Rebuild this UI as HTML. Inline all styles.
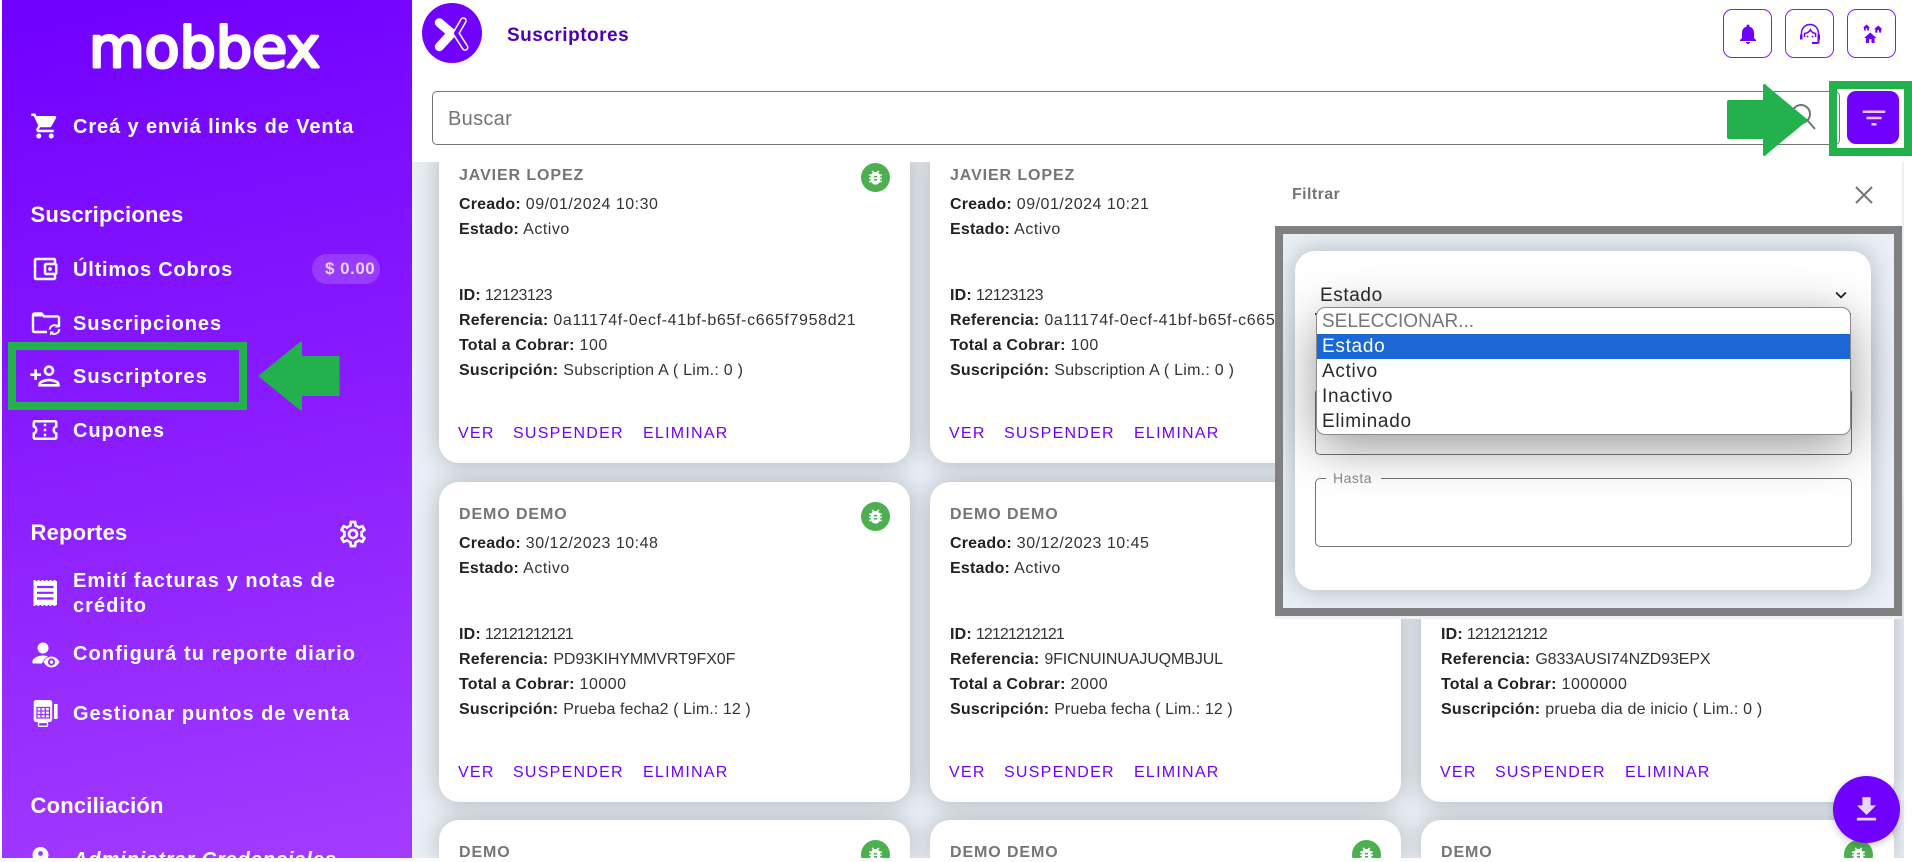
<!DOCTYPE html>
<html lang="es"><head><meta charset="utf-8"><title>Suscriptores</title>
<style>
html,body{margin:0;padding:0;background:#fff;width:1912px;height:862px;overflow:hidden}
body{position:relative;font-family:"Liberation Sans",Arial,sans-serif;color:#292929}
.a{position:absolute;white-space:nowrap}
#side{position:absolute;left:2px;top:0;width:410px;height:858px;overflow:hidden;background:linear-gradient(168deg,#7000ff 0%,#8a1cff 50%,#a43cff 100%);color:#fff}
#side .i{position:absolute;left:71px;font-size:20px;line-height:24px;font-weight:700;letter-spacing:.9px;white-space:nowrap}
#side .h{position:absolute;left:28.5px;font-size:22px;line-height:28px;font-weight:700;letter-spacing:.2px;white-space:nowrap}
#side svg{position:absolute;overflow:visible}
#main{position:absolute;left:412px;top:162px;width:1492px;height:696px;overflow:hidden;background:#e9eff5}
.card{position:absolute;width:471px;height:320px;background:#fff;border-radius:20px;box-shadow:0 0 24px rgba(45,52,58,.3)}
.card.c3{width:473px}
.card.low{height:38px;border-radius:20px 20px 0 0;overflow:hidden}
.card div,.card b,.card span{white-space:nowrap}
.card .l{position:absolute;left:20px;font-size:16px;line-height:20px;letter-spacing:.5px;color:#333}
.card .l b{color:#222;letter-spacing:.2px}
.card .t{position:absolute;left:20px;top:23px;font-size:16px;line-height:20px;font-weight:700;letter-spacing:.9px;color:#757575}
.card .act{position:absolute;top:281px;font-size:16px;line-height:20px;letter-spacing:1.25px;color:#7000ff}
.card svg{position:absolute;left:422px;top:20px;width:29px;height:29px}
.r1{top:52px}.r2{top:77px}.r3{top:143px}.r4{top:168px}.r5{top:193px}.r6{top:218px}
.hex{letter-spacing:.65px}.cod{letter-spacing:-.1px}.sub{letter-spacing:.1px}.id1{letter-spacing:-.5px;margin-left:-1px}.id2{letter-spacing:-.9px;margin-left:-1px}
.hb{position:absolute;top:9px;width:47px;height:47px;border:1.5px solid #7f1cff;border-radius:9px;background:#fff}
#drawer{position:absolute;left:1275px;top:162px;width:627px;height:457px;background:#fff}
.opt{position:absolute;left:0;width:100%;height:25px;line-height:25px;font-size:19px;letter-spacing:.7px;text-indent:5px;color:#2a2a2a;white-space:nowrap}
</style></head>
<body>
<svg width="0" height="0" style="position:absolute"><defs>
<symbol id="bug" viewBox="0 0 29 29"><circle cx="14.5" cy="14.5" r="14.5" fill="#4caf50"/><path transform="translate(5 5) scale(.79)" fill="#fff" d="M20 8h-2.81c-.45-.78-1.07-1.45-1.82-1.96L17 4.41 15.59 3l-2.17 2.17C12.96 5.06 12.49 5 12 5c-.49 0-.96.06-1.41.17L8.41 3 7 4.41l1.62 1.63C7.88 6.55 7.26 7.22 6.81 8H4v2h2.09c-.05.33-.09.66-.09 1v1H4v2h2v1c0 .34.04.67.09 1H4v2h2.81c1.04 1.79 2.97 3 5.19 3s4.15-1.21 5.19-3H20v-2h-2.09c.05-.33.09-.66.09-1v-1h2v-2h-2v-1c0-.34-.04-.67-.09-1H20V8zm-6 8h-4v-2h4v2zm0-4h-4v-2h4v2z"/></symbol>
</defs></svg>

<div id="side">
<svg style="left:88px;top:16px" width="235" height="56"><text x="-1" y="51" font-family="DejaVu Sans" font-size="56" fill="#fff" stroke="#fff" stroke-width="3" stroke-linejoin="round" textLength="231" lengthAdjust="spacingAndGlyphs">mobbex</text></svg>

<svg style="left:28px;top:111px" width="30" height="30" viewBox="0 0 24 24" fill="#fff"><path d="M7 18c-1.1 0-1.99.9-1.99 2S5.9 22 7 22s2-.9 2-2-.9-2-2-2zM1 2v2h2l3.6 7.59-1.35 2.45c-.16.28-.25.61-.25.96 0 1.1.9 2 2 2h12v-2H7.42c-.14 0-.25-.11-.25-.25l.03-.12.9-1.63h7.45c.75 0 1.41-.41 1.75-1.03l3.58-6.49c.08-.14.12-.31.12-.48 0-.55-.45-1-1-1H5.21l-.94-2H1zm16 16c-1.1 0-1.99.9-1.99 2s.89 2 1.99 2 2-.9 2-2-.9-2-2-2z"/></svg>
<div class="i" style="top:115px">Creá y enviá links de Venta</div>

<div class="h" style="top:201px">Suscripciones</div>
<svg style="left:28px;top:254px" width="30" height="30" viewBox="0 0 24 24" fill="#fff"><path d="M21 7.28V5c0-1.1-.9-2-2-2H5c-1.11 0-2 .9-2 2v14c0 1.1.89 2 2 2h14c1.1 0 2-.9 2-2v-2.28c.59-.35 1-.98 1-1.72V9c0-.74-.41-1.38-1-1.72zM20 9v6h-7V9h7zM5 19V5h14v2h-6c-1.1 0-2 .9-2 2v6c0 1.1.9 2 2 2h6v2H5z"/><circle cx="16" cy="12" r="1.5"/></svg>
<div class="i" style="top:258px;letter-spacing:.8px">Últimos Cobros</div>
<div class="a" style="left:310px;top:254px;width:68px;height:30px;border-radius:15px;background:rgba(255,255,255,.17);font-size:17px;line-height:30px;font-weight:700;letter-spacing:.5px;text-indent:13px;color:rgba(255,255,255,.78)">$ 0.00</div>

<svg style="left:28px;top:309px" width="32" height="30" viewBox="0 0 32 30" fill="none" stroke="#fff" stroke-width="2.4"><path d="M29 18V9c0-1-.7-1.6-1.6-1.6H14L11.5 4.500H4.600C3.400 4.500 3 5.300 3 6v15.500c0 1 .6 1.500 1.500 1.500H17"/><path d="M3 5h9l2 2.500H3z" fill="#fff" stroke="none"/><path d="M19.700 20.500a5 5 0 0 1 8.400-3M29.300 20a5 5 0 0 1-8.500 3.500" stroke-width="2"/><path d="M28.800 14.500v4h-4zM20 26.500v-4h4z" fill="#fff" stroke="none"/></svg>
<div class="i" style="top:312px;letter-spacing:.95px">Suscripciones</div>

<svg style="left:27px;top:360px" width="32" height="32" viewBox="0 0 24 24" fill="#fff"><path d="M15 12c2.21 0 4-1.79 4-4s-1.790-4-4-4-4 1.790-4 4 1.790 4 4 4zm0-6c1.100 0 2 .9 2 2s-.9 2-2 2-2-.9-2-2 .9-2 2-2zm0 8c-2.670 0-8 1.340-8 4v2h16v-2c0-2.660-5.330-4-8-4zm-6 4c.22-.72 3.310-2 6-2 2.700 0 5.800 1.290 6 2H9zm-3-3v-3h3v-2H6V7H4v3H1v2h3v3h2z"/></svg>
<div class="i" style="top:364.5px;letter-spacing:1.05px">Suscriptores</div>

<svg style="left:28px;top:415px" width="30" height="30" viewBox="0 0 24 24" fill="#fff"><path d="M22 10V6c0-1.110-.9-2-2-2H4c-1.100 0-1.990.89-1.990 2v4c1.100 0 1.990.9 1.990 2s-.89 2-2 2v4c0 1.100.9 2 2 2h16c1.100 0 2-.9 2-2v-4c-1.100 0-2-.9-2-2s.9-2 2-2zm-2-1.460c-1.190.69-2 1.990-2 3.460s.81 2.770 2 3.460V18H4v-2.540c1.190-.69 2-1.990 2-3.460 0-1.480-.8-2.770-1.990-3.460L4 6h16v2.540zM11 15h2v2h-2zm0-4h2v2h-2zm0-4h2v2h-2z"/></svg>
<div class="i" style="top:419px">Cupones</div>

<div class="h" style="top:519px">Reportes</div>
<svg style="left:335px;top:518px" width="32" height="32" viewBox="0 0 24 24" fill="#fff"><path d="M19.430 12.980c.04-.32.07-.64.07-.98 0-.34-.03-.66-.07-.98l2.110-1.650c.19-.15.24-.42.12-.64l-2-3.460c-.09-.16-.26-.25-.44-.25-.06 0-.12.01-.17.03l-2.490 1c-.52-.4-1.080-.73-1.690-.98l-.38-2.650C14.460 2.180 14.250 2 14 2h-4c-.25 0-.46.18-.49.42l-.38 2.650c-.61.25-1.170.59-1.690.98l-2.490-1c-.06-.02-.12-.03-.18-.03-.17 0-.34.09-.43.25l-2 3.460c-.13.22-.07.49.12.64l2.110 1.650c-.04.32-.07.65-.07.98 0 .33.03.66.07.98l-2.110 1.650c-.19.15-.24.42-.12.64l2 3.460c.09.16.26.25.44.25.06 0 .12-.01.17-.03l2.490-1c.52.4 1.080.73 1.690.98l.38 2.650c.03.24.24.42.49.42h4c.25 0 .46-.18.49-.42l.38-2.650c.61-.25 1.170-.59 1.690-.98l2.490 1c.06.02.12.03.18.03.17 0 .34-.09.43-.25l2-3.460c.12-.22.07-.49-.12-.64l-2.110-1.650zm-1.980-1.710c.04.31.05.52.05.73 0 .21-.02.43-.05.73l-.14 1.130.89.7 1.080.84-.7 1.210-1.270-.51-1.040-.42-.9.68c-.43.32-.84.56-1.250.73l-1.060.43-.16 1.130-.2 1.350h-1.400l-.19-1.350-.16-1.130-1.060-.43c-.43-.18-.83-.41-1.230-.71l-.91-.7-1.060.43-1.270.51-.7-1.210 1.080-.84.89-.7-.14-1.130c-.03-.31-.05-.54-.05-.74s.02-.43.05-.73l.14-1.130-.89-.7-1.080-.84.7-1.210 1.270.51 1.040.42.9-.68c.43-.32.84-.56 1.250-.73l1.060-.43.16-1.130.2-1.350h1.390l.19 1.350.16 1.130 1.060.43c.43.18.83.41 1.230.71l.91.7 1.060-.43 1.270-.51.7 1.210-1.070.85-.89.7.14 1.130zM12 8c-2.210 0-4 1.790-4 4s1.790 4 4 4 4-1.790 4-4-1.790-4-4-4zm0 6c-1.100 0-2-.9-2-2s.9-2 2-2 2 .9 2 2-.9 2-2 2z"/></svg>

<svg style="left:31px;top:580px" width="25" height="26" viewBox="0 0 25 26"><rect x=".5" y="1" width="23.500" height="24" fill="#fff"/><path d="M.5 .8h23.500M.5 25.200h23.500" stroke="#fff" stroke-width="1.600" stroke-dasharray="2 2"/><path d="M4 7h16.500M4 12.800h16.500M4 18.500h16.500" stroke="#8f25ff" stroke-width="2.200"/></svg>
<div class="i" style="top:568.5px;letter-spacing:1.05px">Emití facturas y notas de</div>
<div class="i" style="top:593.5px;letter-spacing:1.05px">crédito</div>

<svg style="left:30px;top:641px" width="30" height="28" viewBox="0 0 30 28"><circle cx="11" cy="7" r="5.500" fill="#fff"/><path d="M.5 22.500v-2c0-3.500 6-6 10.500-6 1.700 0 3.500.4 5 1-2.500 1.500-4.500 3.300-6 7z" fill="#fff"/><path d="M11.500 21c2-3.600 5-5.500 8-5.500s6 1.900 8 5.500c-2 3.600-5 5.500-8 5.500s-6-1.900-8-5.500z" fill="#fff"/><circle cx="19.500" cy="21" r="3.600" fill="#9529ff"/><circle cx="19.500" cy="21" r="1.700" fill="#fff"/></svg>
<div class="i" style="top:641.5px;letter-spacing:1.1px">Configurá tu reporte diario</div>

<svg style="left:31px;top:699px" width="26" height="28" viewBox="0 0 26 28"><rect x=".7" y="1" width="18.500" height="22" rx="2.500" fill="#fff"/><rect x="4" y="4" width="12" height="15" fill="#fff"/><path d="M4 8.500h12.500v10.500H4zM8 8.500v10.500M12.300 8.500v10.500M4 12h12.500M4 15.500h12.500" fill="none" stroke="#9a30ff" stroke-width="1.300"/><rect x="21" y="5" width="3.600" height="15" rx=".6" fill="#fff"/><path d="M5.500 23.500h9v3c0 .5-.4.8-.8.8H6.300c-.4 0-.8-.3-.8-.8z" fill="none" stroke="#fff" stroke-width="1.300"/></svg>
<div class="i" style="top:701.5px;letter-spacing:1px">Gestionar puntos de venta</div>

<div class="h" style="top:792px">Conciliación</div>
<svg style="left:30px;top:847px;overflow:hidden" width="18" height="11" viewBox="0 0 18 11"><circle cx="8.500" cy="8" r="8" fill="#fff"/><circle cx="8.500" cy="6.500" r="2.400" fill="#a03aff"/></svg>
<div class="i" style="top:848px;height:10px;overflow:hidden;font-style:italic">Administrar Credenciales</div>
</div>

<!-- header -->
<svg class="a" style="left:420px;top:0" width="70" height="70" viewBox="0 0 70 70"><circle cx="32" cy="33" r="30" fill="#7000ff"/><path d="M19.300 22.700 31.700 33.300 19.300 46.700" fill="none" stroke="#fff" stroke-width="9" stroke-linecap="round" stroke-linejoin="round"/><path d="M43.300 20.700 36 33.300 45 47.300" fill="none" stroke="#fff" stroke-width="7" stroke-linecap="round" stroke-linejoin="round"/><path d="M43.300 20.700 36 33.300 45 47.300" fill="none" stroke="#7000ff" stroke-width="4" stroke-linecap="round" stroke-linejoin="round"/></svg>
<div class="a" style="left:507px;top:24px;font-size:19px;line-height:24px;font-weight:700;letter-spacing:.5px;color:#4b00b5">Suscriptores</div>

<div class="hb" style="left:1723px"><svg style="position:absolute;left:11.500px;top:11.500px" width="24" height="24" viewBox="0 0 24 24" fill="#7000ff"><path d="M12 22c1.100 0 2-.9 2-2h-4c0 1.100.89 2 2 2zm6-6v-5c0-3.070-1.640-5.640-4.500-6.320V4c0-.83-.67-1.500-1.500-1.500s-1.500.67-1.500 1.500v.68C7.630 5.360 6 7.920 6 11v5l-2 2v1h16v-1l-2-2z"/></svg></div>
<div class="hb" style="left:1785px"><svg style="position:absolute;left:11.500px;top:11.500px" width="24" height="24" viewBox="0 0 24 24" fill="none" stroke="#7000ff" stroke-width="1.500"><path d="M3.500 15v-4a8.500 8.500 0 0 1 17 0v4"/><path d="M6.500 15v-3.500c3-.3 4.800-1.700 5.800-3.800 1 2.100 2.500 3.500 5.300 3.800V15"/><rect x="2" y="12.500" width="2.500" height="5" fill="#7000ff" stroke="none"/><rect x="19.500" y="12.500" width="2.500" height="5" fill="#7000ff" stroke="none"/><path d="M20.500 17.500v2c0 .9-.6 1.500-1.500 1.500h-5" stroke-width="2"/><circle cx="9.500" cy="14.500" r=".9" fill="#7000ff" stroke="none"/><circle cx="14.500" cy="14.500" r=".9" fill="#7000ff" stroke="none"/></svg></div>
<div class="hb" style="left:1847px"><svg style="position:absolute;left:9.500px;top:15px;overflow:visible" width="30" height="30" viewBox="0 0 30 30" fill="#7000ff"><g transform="translate(4.800 5.600) scale(.62)"><path d="M10 20v-6h4v6h5v-8h3L12 3 2 12h3v8z"/></g><g transform="translate(4.300 -1.500) scale(.35)"><path d="M10 20v-6h4v6h5v-8h3L12 3 2 12h3v8z"/></g><g transform="translate(15.200 -.8) scale(.42)"><path d="M10 20v-6h4v6h5v-8h3L12 3 2 12h3v8z"/></g></svg></div>

<!-- search -->
<div class="a" style="left:432px;top:91px;width:1406px;height:52px;border:1px solid #767676;border-radius:5px;background:#fff"></div>
<div class="a" style="left:448px;top:107px;font-size:20px;line-height:24px;letter-spacing:.3px;color:#757575">Buscar</div>
<svg class="a" style="left:1788px;top:101px" width="32" height="34" viewBox="0 0 32 34" fill="none" stroke="#757575" stroke-width="2"><circle cx="13" cy="13" r="9"/><path d="M20 20 27 28"/></svg>
<div class="a" style="left:1847px;top:91px;width:52px;height:53px;border-radius:9px;background:#7000ff"></div>
<svg class="a" style="left:1859px;top:103px" width="30" height="30" viewBox="0 0 24 24" fill="#e3ceff"><path d="M10 18h4v-2h-4v2zM3 6v2h18V6H3zm3 7h12v-2H6v2z"/></svg>
<div class="a" style="left:1829px;top:81px;width:67px;height:59px;border:8px solid #22b14c"></div>
<svg class="a" style="left:1726px;top:82px" width="84" height="76" viewBox="0 0 84 76"><path d="M3 18h34V3l1 -1q2 0 3 2L82 38 41 72q-1 2-3 2l-1-1V57H3q-2 0-2-2V20q0-2 2-2z" fill="#22b14c"/></svg>

<!-- cards -->
<div id="main">
<div class="card" style="left:27px;top:-19px"><div class="t">JAVIER LOPEZ</div><svg><use href="#bug"/></svg>
<div class="l r1"><b>Creado:</b> 09/01/2024 10:30</div><div class="l r2"><b>Estado:</b> Activo</div>
<div class="l r3"><b>ID:</b> <span class="id1">12123123</span></div><div class="l r4"><b>Referencia:</b> <span class="hex">0a11174f-0ecf-41bf-b65f-c665f7958d21</span></div><div class="l r5"><b>Total a Cobrar:</b> 100</div><div class="l r6"><b>Suscripción:</b> <span style="letter-spacing:.25px">Subscription A ( Lim.: 0 )</span></div>
<span class="act" style="left:19px">VER</span><span class="act" style="left:74px">SUSPENDER</span><span class="act" style="left:204px">ELIMINAR</span></div>

<div class="card" style="left:518px;top:-19px"><div class="t">JAVIER LOPEZ</div><svg><use href="#bug"/></svg>
<div class="l r1"><b>Creado:</b> 09/01/2024 10:21</div><div class="l r2"><b>Estado:</b> Activo</div>
<div class="l r3"><b>ID:</b> <span class="id1">12123123</span></div><div class="l r4"><b>Referencia:</b> <span class="hex">0a11174f-0ecf-41bf-b65f-c665f7958d21</span></div><div class="l r5"><b>Total a Cobrar:</b> 100</div><div class="l r6"><b>Suscripción:</b> <span style="letter-spacing:.25px">Subscription A ( Lim.: 0 )</span></div>
<span class="act" style="left:19px">VER</span><span class="act" style="left:74px">SUSPENDER</span><span class="act" style="left:204px">ELIMINAR</span></div>

<div class="card" style="left:27px;top:320px"><div class="t">DEMO DEMO</div><svg><use href="#bug"/></svg>
<div class="l r1"><b>Creado:</b> 30/12/2023 10:48</div><div class="l r2"><b>Estado:</b> Activo</div>
<div class="l r3"><b>ID:</b> <span class="id2">12121212121</span></div><div class="l r4"><b>Referencia:</b> <span class="cod">PD93KIHYMMVRT9FX0F</span></div><div class="l r5"><b>Total a Cobrar:</b> 10000</div><div class="l r6"><b>Suscripción:</b> <span class="sub">Prueba fecha2 ( Lim.: 12 )</span></div>
<span class="act" style="left:19px">VER</span><span class="act" style="left:74px">SUSPENDER</span><span class="act" style="left:204px">ELIMINAR</span></div>

<div class="card" style="left:518px;top:320px"><div class="t">DEMO DEMO</div><svg><use href="#bug"/></svg>
<div class="l r1"><b>Creado:</b> 30/12/2023 10:45</div><div class="l r2"><b>Estado:</b> Activo</div>
<div class="l r3"><b>ID:</b> <span class="id2">12121212121</span></div><div class="l r4"><b>Referencia:</b> <span class="cod">9FICNUINUAJUQMBJUL</span></div><div class="l r5"><b>Total a Cobrar:</b> 2000</div><div class="l r6"><b>Suscripción:</b> <span class="sub">Prueba fecha ( Lim.: 12 )</span></div>
<span class="act" style="left:19px">VER</span><span class="act" style="left:74px">SUSPENDER</span><span class="act" style="left:204px">ELIMINAR</span></div>

<div class="card c3" style="left:1009px;top:320px"><div class="t">DEMO</div><svg><use href="#bug"/></svg>
<div class="l r3"><b>ID:</b> <span class="id2">1212121212</span></div><div class="l r4"><b>Referencia:</b> <span class="cod">G833AUSI74NZD93EPX</span></div><div class="l r5"><b>Total a Cobrar:</b> 1000000</div><div class="l r6"><b>Suscripción:</b> <span style="letter-spacing:.2px">prueba dia de inicio ( Lim.: 0 )</span></div>
<span class="act" style="left:19px">VER</span><span class="act" style="left:74px">SUSPENDER</span><span class="act" style="left:204px">ELIMINAR</span></div>

<div class="card low" style="left:27px;top:658px"><div class="t">DEMO</div><svg><use href="#bug"/></svg></div>
<div class="card low" style="left:518px;top:658px"><div class="t">DEMO DEMO</div><svg><use href="#bug"/></svg></div>
<div class="card low c3" style="left:1009px;top:658px"><div class="t">DEMO</div><svg style="left:423px"><use href="#bug"/></svg></div>
</div>

<!-- filter drawer -->
<div id="drawer">
<div class="a" style="left:17px;top:23px;font-size:16px;line-height:20px;font-weight:700;letter-spacing:.4px;color:#757575">Filtrar</div>
<svg class="a" style="left:578px;top:22px" width="22" height="22" viewBox="0 0 22 22" stroke="#757575" stroke-width="2" fill="none"><path d="M3 3 19 19M19 3 3 19"/></svg>
<div class="a" style="left:0;top:64px;width:627px;height:390px;box-sizing:border-box;border:8px solid #808080;background:#e9eff5;overflow:hidden">
  <div class="a" style="left:12px;top:17px;width:576px;height:339px;border-radius:20px;background:#fff;box-shadow:0 0 24px rgba(45,52,58,.3)">
    <div class="a" style="left:25px;top:33px;font-size:19px;line-height:24px;letter-spacing:.6px;color:#2a2a2a">Estado</div>
    <svg class="a" style="left:535px;top:33px" width="22" height="22" viewBox="0 0 24 24" fill="#222"><path d="M7.410 8.590 12 13.170l4.590-4.580L18 10l-6 6-6-6z"/></svg>
    <div class="a" style="left:20px;top:62px;width:536px;height:1.500px;background:#7000ff"></div>
    <div class="a" style="left:20px;top:137px;width:537px;height:67px;box-sizing:border-box;border:1px solid #767676;border-radius:5px"></div>
    <fieldset class="a" style="left:20px;top:218px;width:537px;height:78px;box-sizing:border-box;margin:0;padding:0;border:1px solid #767676;border-radius:5px"><legend style="margin-left:10px;padding:0 9px 0 7px;font-size:14px;line-height:18px;letter-spacing:.5px;color:#8a8a8a">Hasta</legend></fieldset>
    <div class="a" style="left:22px;top:57px;width:533px;height:126px;border-radius:8px;background:#fff;box-shadow:0 0 0 1px #8a8a8a,0 12px 50px rgba(0,0,0,.42);overflow:hidden">
      <div class="opt" style="top:1px;color:#757575;letter-spacing:0">SELECCIONAR...</div>
      <div class="opt" style="top:26px;background:#1a67d5;color:#fff">Estado</div>
      <div class="opt" style="top:51px">Activo</div>
      <div class="opt" style="top:76px">Inactivo</div>
      <div class="opt" style="top:101px">Eliminado</div>
    </div>
  </div>
</div>
<div class="a" style="left:0;top:454px;width:627px;height:3px;background:#eef2f7"></div>
</div>

<!-- fab -->
<div class="a" style="left:1833px;top:776px;width:67px;height:67px;border-radius:50%;background:#7000ff;box-shadow:0 3px 8px rgba(0,0,0,.2)"></div>
<svg class="a" style="left:1850px;top:793px" width="33" height="33" viewBox="0 0 24 24" fill="#e6d5ff"><path d="M19 9h-4V3H9v6H5l7 7 7-7zM5 18v2h14v-2H5z"/></svg>

<!-- green annotation left -->
<div class="a" style="left:8px;top:342px;width:223px;height:52px;border:8px solid #22b14c"></div>
<svg class="a" style="left:257px;top:340px" width="84" height="72" viewBox="0 0 84 72"><path d="M1 36 43 2q2-1 2 1v13h36q1.500 0 1.500 2v36q0 2-1.500 2H45v13q0 2-2 1z" fill="#22b14c"/></svg>
</body></html>
